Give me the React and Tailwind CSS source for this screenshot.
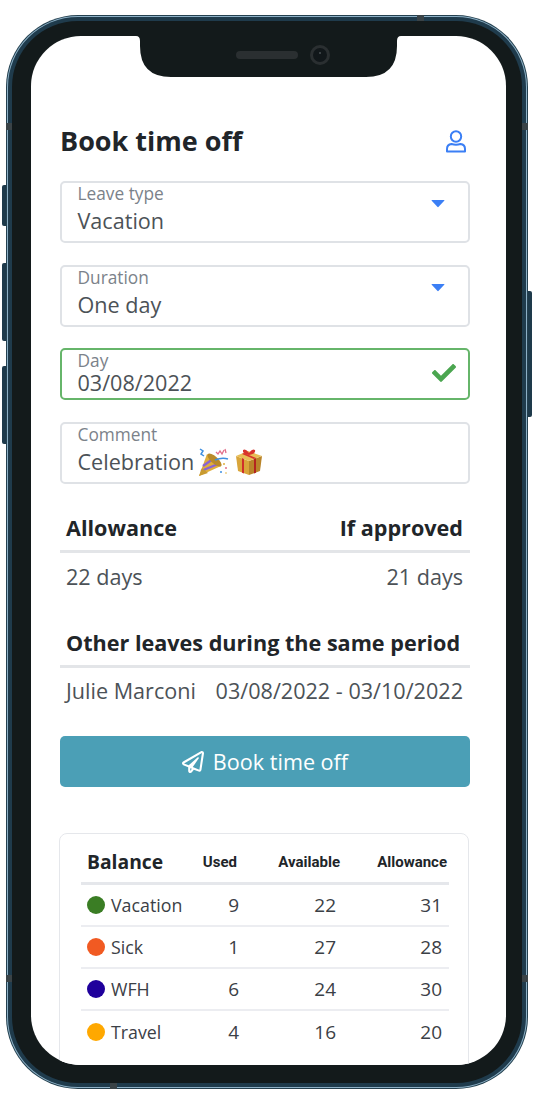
import { FaCheck, FaRegPaperPlane } from 'react-icons/fa'

const balances = [
  { name: 'Vacation', color: 'bg-[#3a7d24]', used: 9, available: 22, allowance: 31 },
  { name: 'Sick', color: 'bg-[#f15a22]', used: 1, available: 27, allowance: 28 },
  { name: 'WFH', color: 'bg-[#1f009c]', used: 6, available: 24, allowance: 30 },
  { name: 'Travel', color: 'bg-[#ffa800]', used: 4, available: 16, allowance: 20 },
]

const Caret = () => (
  <svg width="14" height="9" viewBox="0 0 14 9" className="absolute right-[23px] top-[16px]">
    <path d="M0.5 1.5 Q0.5 1 1 1 H13 Q13.5 1 13.5 1.5 L7.4 8 Q7 8.3 6.6 8 Z" fill="#3b7ff5" />
  </svg>
)

const Field = ({ label, value, caret }) => (
  <div className="relative h-[62px] rounded-[5px] border-2 border-[#dfe2e6] bg-white pl-[15.5px] pt-[1px]">
    <div className="text-[17.3px] leading-[20px] text-[#7b828a]">{label}</div>
    <div className="mt-[2px] flex items-center text-[21.6px] leading-[30px] text-[#4c5257]">{value}</div>
    {caret && <Caret />}
  </div>
)

const PartyPopper = () => (
  <svg width="31" height="29" viewBox="0 0 31 29" className="ml-[4px]">
    <path d="M1 28 L9 6 L23 18 Z" fill="#e0ae3c" />
    <path d="M5 18 L15 11 M3 23 L20 16" stroke="#8a63d2" strokeWidth="2.4" />
    <path d="M1 28 L4 20 L10 25 Z" fill="#c89a30" />
    <ellipse cx="16.5" cy="12" rx="3.5" ry="9" transform="rotate(-48 16.5 12)" fill="#b98a2a" />
    <path d="M18 4 L20 6 L22 3 L24 6 L26 2 M27 1 L28 5" stroke="#e2708a" strokeWidth="1.3" fill="none" />
    <path d="M2 1 L5 3 L3 6 L6 8 M17 12 Q24 9 30 11" stroke="#3f8fe0" strokeWidth="1.5" fill="none" />
    <circle cx="26" cy="16" r="1" fill="#e0ae3c" />
    <circle cx="28" cy="20" r="1" fill="#e2708a" />
    <circle cx="23" cy="24" r="1" fill="#3f8fe0" />
    <circle cx="28" cy="25" r="0.8" fill="#e0ae3c" />
  </svg>
)

const Gift = () => (
  <svg width="28" height="28" viewBox="0 0 28 28" className="ml-[6px]">
    <path d="M1 8 L14 13 V27 L3 23 Z" fill="#d9a53a" />
    <path d="M27 8 L14 13 V27 L25 23 Z" fill="#b9842a" />
    <path d="M1 8 L13 3 L27 8 L14 13 Z" fill="#e8bd55" />
    <path d="M7 10 L9 11 V25.5 L7 24.7 Z" fill="#cf2f2a" />
    <path d="M19 11 L21 10 V24.7 L19 25.5 Z" fill="#b3241f" />
    <path d="M7 6 L19 11 L21 10 L9 5 Z" fill="#d8322c" />
    <path d="M14 7 Q7 6 8 2 Q11 0 14 5 Q17 0 20 2 Q21 6 14 7 Z" fill="#d8322c" />
  </svg>
)

const App = () => {
  return (
    <div className="relative h-[1099px] w-[538px] overflow-hidden bg-white font-['Open_Sans',sans-serif]">
      {/* side buttons */}
      <div className="absolute left-[2px] top-[185px] h-[41px] w-[5px] rounded-l-[2px] bg-[#1e3a4b]" />
      <div className="absolute left-[2px] top-[263px] h-[78px] w-[5px] rounded-l-[2px] bg-[#1e3a4b]" />
      <div className="absolute left-[2px] top-[366px] h-[78px] w-[5px] rounded-l-[2px] bg-[#1e3a4b]" />
      <div className="absolute left-[527px] top-[291px] h-[126px] w-[5px] rounded-r-[2px] bg-[#1e3a4b]" />

      {/* phone body */}
      <div className="absolute left-[6px] top-[15px] h-[1074px] w-[522px] rounded-[72px] bg-[#24404f] p-[1px]">
        <div className="h-full rounded-[71px] bg-[#8db0c6] p-[1px]">
          <div className="h-full rounded-[70px] bg-[#1f3b4c] p-[4px]">
            <div className="h-full rounded-[66px] bg-[#131a1b] pb-[18px] pl-[19px] pr-[16px] pt-[15px]">
              <div className="h-full overflow-hidden rounded-[50px] bg-white pl-[29px] pr-[36px] pt-[86px]">
                <div className="flex h-[38px] items-center justify-between pr-[4px]">
                  <h1 className="text-[27px] font-bold leading-[38px] text-[#212529]">Book time off</h1>
                  <svg width="20" height="23" viewBox="0 0 20 23" fill="none" stroke="#3b7ff5" strokeWidth="2">
                    <circle cx="10" cy="6.5" r="5.2" />
                    <path d="M1 21.5 V19 Q1 14.5 5.5 14 Q10 15.5 14.5 14 Q19 14.5 19 19 V21.5 Z" strokeLinejoin="round" />
                  </svg>
                </div>

                <div className="mt-[21px] flex flex-col gap-[22px]">
                  <Field label="Leave type" value="Vacation" caret />
                  <Field label="Duration" value="One day" caret />
                  <div className="relative -mt-[1px] h-[52px] rounded-[5px] border-2 border-[#66b56a] bg-white pl-[15.5px] pt-[1px]">
                    <div className="text-[17.3px] leading-[20px] text-[#7b828a]">Day</div>
                    <div className="-mt-[1px] text-[21.6px] leading-[26px] text-[#4c5257]">03/08/2022</div>
                    <FaCheck className="absolute right-[12px] top-[11px] text-[24px] text-[#4ba650]" />
                  </div>
                  <Field
                    label="Comment"
                    value={
                      <>
                        Celebration
                        <PartyPopper />
                        <Gift />
                      </>
                    }
                  />
                </div>

                <div className="mt-[24px] flex h-[45px] items-center justify-between border-b-[3px] border-[#e3e5e8] pb-[2px] pl-[6px] pr-[7px] text-[21.6px] font-bold text-[#212529]">
                  <span>Allowance</span>
                  <span>If approved</span>
                </div>
                <div className="flex h-[48px] items-center justify-between pl-[6px] pr-[7px] text-[21.6px] text-[#4c5257]">
                  <span>22 days</span>
                  <span>21 days</span>
                </div>

                <div className="mt-[30px] flex h-[25px] items-center whitespace-nowrap px-[6px] text-[21.6px] font-bold text-[#212529]">
                  Other leaves during the same period
                </div>
                <div className="mt-[9px] h-[3px] bg-[#e3e5e8]" />
                <div className="flex h-[46px] items-center justify-between whitespace-nowrap pl-[6px] pr-[7px] text-[21.6px] text-[#4c5257]">
                  <span>Julie Marconi</span>
                  <span>03/08/2022 - 03/10/2022</span>
                </div>

                <button className="mt-[22px] flex h-[51px] w-full items-center justify-center rounded-[5px] bg-[#4b9fb6] pt-[1px] text-[21.6px] text-white">
                  <FaRegPaperPlane className="mr-[9px] text-[22px]" />
                  <span className="font-normal">Book time off</span>
                </button>

                <div className="-ml-[1px] mr-[1px] mt-[46px] h-[300px] rounded-[8px] border border-[#e5e7eb] bg-white pl-[21px] pr-[19px] pt-[12px]">
                  <div className="grid h-[39px] grid-cols-[100px_56px_103px_107px_2px] items-center border-b-[3px] border-[#e5e7eb] pb-[3px]">
                    <span className="pl-[6px] text-[19.3px] font-bold text-[#212529]">Balance</span>
                    <span className="text-right font-['Roboto',sans-serif] text-[15px] font-bold text-[#212529]">Used</span>
                    <span className="text-right font-['Roboto',sans-serif] text-[15px] font-bold text-[#212529]">Available</span>
                    <span className="text-right font-['Roboto',sans-serif] text-[15px] font-bold text-[#212529]">Allowance</span>
                  </div>
                  {balances.map((row) => (
                    <div
                      key={row.name}
                      className="grid h-[42px] grid-cols-[120px_38px_97px_106px_7px] items-center border-b-[2px] border-[#ecedf1] text-[#3b4046] last:border-b-0"
                    >
                      <span className="flex items-center pl-[6px] text-[17.8px]">
                        <span className={`mr-[6px] h-[18px] w-[18px] rounded-full ${row.color}`} />
                        {row.name}
                      </span>
                      <span className="text-right text-[19px]">{row.used}</span>
                      <span className="text-right text-[19px]">{row.available}</span>
                      <span className="text-right text-[19px]">{row.allowance}</span>
                    </div>
                  ))}
                </div>
              </div>
            </div>
          </div>
        </div>
      </div>

      {/* notch */}
      <svg width="265" height="42" viewBox="0 0 265 42" className="absolute left-[136px] top-[36px]">
        <path d="M0 0 H265 Q261 0 261 5 V10 Q261 41 230 41 H35 Q4 41 4 10 V5 Q4 0 0 0 Z" fill="#131a1b" />
      </svg>
      <div className="absolute left-[236px] top-[51px] h-[8px] w-[62px] rounded-full bg-[#2a2f31]" />
      <div className="absolute left-[310px] top-[45px] flex h-[20px] w-[20px] items-center justify-center rounded-full border-[3px] border-[#2a2f31] bg-[#11171a]">
        <span className="mb-[4px] h-[2px] w-[2px] rounded-full bg-[#4a5254]" />
      </div>

      {/* antenna bands */}
      <div className="absolute left-[417px] top-[15px] h-[6px] w-[7px] bg-[#3a4347]" />
      <div className="absolute left-[6px] top-[123px] h-[7px] w-[6px] bg-[#3a4347]" />
      <div className="absolute left-[522px] top-[123px] h-[7px] w-[6px] bg-[#3a4347]" />
      <div className="absolute left-[6px] top-[975px] h-[7px] w-[6px] bg-[#3a4347]" />
      <div className="absolute left-[522px] top-[975px] h-[7px] w-[6px] bg-[#3a4347]" />
      <div className="absolute left-[110px] top-[1083px] h-[6px] w-[7px] bg-[#3a4347]" />
    </div>
  )
}

export default App
